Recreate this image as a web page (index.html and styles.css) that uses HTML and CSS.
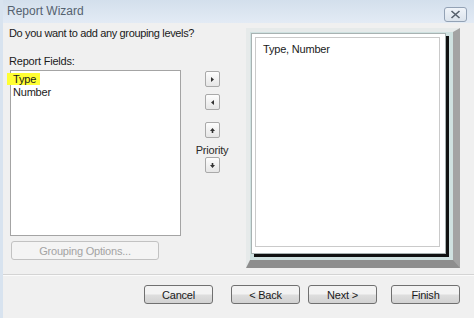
FILE: index.html
```html
<!DOCTYPE html>
<html lang="en">

<head>
    <meta charset="UTF-8">
    <title>Report Wizard</title>
    <link rel="stylesheet" href="styles.css">
</head>

<body>
    <div class="window">
        <div class="titlebar">
            <span class="title">Report Wizard</span>
            <div class="close">
                <svg width="11" height="9" viewBox="0 0 11 9">
                    <path d="M1.5 1 L9.5 8 M9.5 1 L1.5 8" stroke="#56606c" stroke-width="1.6" fill="none"/>
                </svg>
            </div>
        </div>

        <div class="main">
            <div class="left">
                <p class="question">Do you want to add any grouping levels?</p>
                <p class="label">Report Fields:</p>
                <div class="listbox">
                    <div class="item"><span class="marked">Type</span></div>
                    <div class="item">Number</div>
                </div>
                <div class="grouping">Grouping Options...</div>
            </div>

            <div class="middle">
                <div class="arrow first">
                    <svg width="7" height="7" viewBox="0 0 7 7"><path d="M2 1 L5 3.5 L2 6 Z" fill="#333"/></svg>
                </div>
                <div class="arrow">
                    <svg width="7" height="7" viewBox="0 0 7 7"><path d="M5 1 L2 3.5 L5 6 Z" fill="#333"/></svg>
                </div>
                <div class="arrow up">
                    <svg width="7" height="7" viewBox="0 0 7 7"><path d="M3.5 1 L6 4 L4.3 4 L4.3 6 L2.7 6 L2.7 4 L1 4 Z" fill="#333"/></svg>
                </div>
                <div class="priority">Priority</div>
                <div class="arrow">
                    <svg width="7" height="7" viewBox="0 0 7 7"><path d="M3.5 6 L6 3 L4.3 3 L4.3 1 L2.7 1 L2.7 3 L1 3 Z" fill="#333"/></svg>
                </div>
            </div>

            <div class="right">
                <div class="base">
                    <div class="paper">
                        <div class="sheet">Type, Number</div>
                    </div>
                </div>
            </div>
        </div>

        <div class="footer">
            <div class="btn cancel">Cancel</div>
            <div class="btn back">&lt; Back</div>
            <div class="btn next">Next &gt;</div>
            <div class="btn finish">Finish</div>
        </div>
    </div>
</body>

</html>
```

FILE: styles.css
```css
* {
    margin: 0;
    padding: 0;
    box-sizing: border-box;
}

body {
    font-family: "Liberation Sans", Arial, sans-serif;
    font-size: 11px;
    color: #1a1a1a;
    letter-spacing: -0.2px;
}

.window {
    width: 474px;
    height: 318px;
    background-color: #f0f0f0;
    border-left: 3px solid #d8e3ef;
    display: flex;
    flex-direction: column;
    overflow: hidden;
}

.titlebar {
    height: 23px;
    background: linear-gradient(#d3dfec, #e3ebf5);
    display: flex;
    align-items: center;
    padding-left: 4px;
    padding-right: 7px;
}

.title {
    flex: 1;
    font-size: 12px;
    letter-spacing: 0;
    color: #55626f;
    margin-top: -2px;
}

.close {
    width: 23px;
    height: 15px;
    margin-top: 5px;
    border: 1px solid #93a2b5;
    border-radius: 3px;
    background: linear-gradient(#f0f4f9, #dbe3ec);
    display: flex;
    align-items: center;
    justify-content: center;
}

.main {
    height: 251px;
    display: flex;
}

.left {
    width: 187px;
    padding-left: 6px;
    white-space: nowrap;
}

.question {
    margin-top: 3px;
    line-height: 14px;
    letter-spacing: -0.35px;
}

.label {
    margin-top: 14px;
    line-height: 14px;
}

.listbox {
    margin-top: 2px;
    margin-left: 1px;
    width: 171px;
    height: 166px;
    background-color: #fff;
    border: 1px solid #a4a4a4;
    padding-top: 2px;
}

.item {
    padding-left: 2px;
    line-height: 13px;
}

.marked {
    background-color: #ffff33;
    margin-left: -6px;
    padding: 0 4px 0 6px;
}

.grouping {
    margin-top: 5px;
    margin-left: 2px;
    width: 148px;
    height: 19px;
    border: 1px solid #c2c2c2;
    border-radius: 3px;
    background-color: #f4f4f4;
    color: #a3a3a3;
    display: flex;
    align-items: center;
    justify-content: center;
}

.middle {
    width: 44px;
    display: flex;
    flex-direction: column;
    align-items: center;
}

.arrow {
    width: 15px;
    height: 16px;
    margin-top: 7px;
    border: 1px solid #a9a9a9;
    border-radius: 2px;
    background: linear-gradient(#fdfdfd, #e6e6e6);
    display: flex;
    align-items: center;
    justify-content: center;
}

.arrow.first {
    margin-top: 48px;
}

.arrow.up {
    margin-top: 12px;
}

.priority {
    margin-top: 5px;
    line-height: 14px;
    color: #2a2a2a;
}

.priority + .arrow {
    margin-top: 0;
}

.right {
    flex: 1;
    padding-left: 12px;
    padding-top: 5px;
}

.base {
    width: 214px;
    height: 240px;
    border-top: 4px solid #e6eaea;
    border-left: 4px solid #e6eaea;
    border-right: 7px solid #a3a3a3;
    border-bottom: 8px solid #8e8e8e;
    background-color: #cfe1e0;
    padding: 1px 0 0 1px;
}

.paper {
    width: 195px;
    height: 221px;
    background-color: #fff;
    border: 1px solid #a8b2b2;
    box-shadow: 3px 3px 0 #111;
    padding: 3px 0 0 3px;
}

.sheet {
    width: 185px;
    height: 210px;
    border: 1px solid #cacaca;
    padding: 4px 0 0 7px;
    line-height: 14px;
}

.footer {
    flex: 1;
    border-top: 1px solid #d4d4d4;
    box-shadow: inset 0 1px 0 #fbfbfb;
    display: flex;
    align-items: flex-start;
    padding-top: 10px;
}

.btn {
    width: 69px;
    height: 19px;
    border: 1px solid #707070;
    border-radius: 3px;
    background: linear-gradient(#f3f3f3 45%, #dddddd 55%, #d2d2d2);
    display: flex;
    align-items: center;
    justify-content: center;
}

.cancel {
    margin-left: 141px;
}

.back {
    margin-left: 18px;
}

.next {
    margin-left: 8px;
}

.finish {
    margin-left: 14px;
}
```
